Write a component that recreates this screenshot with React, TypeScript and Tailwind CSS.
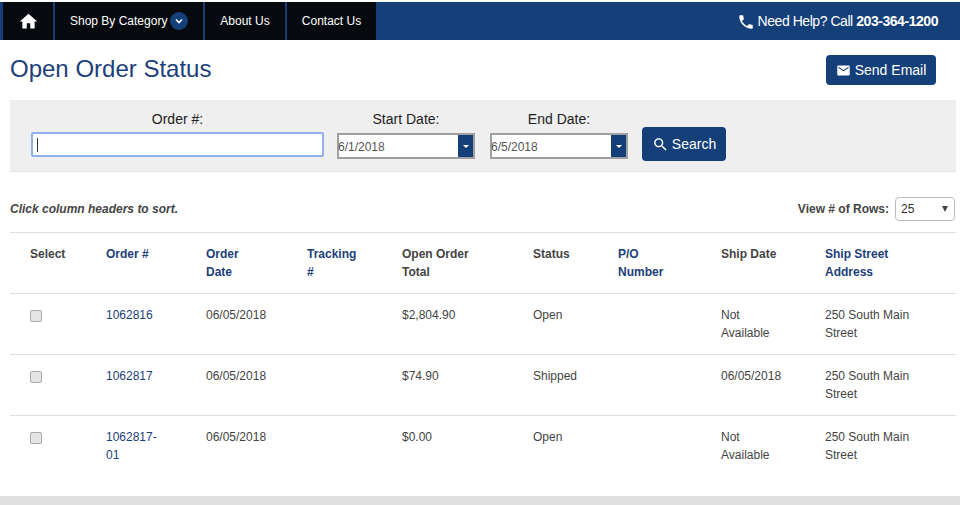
import React from 'react';

const rows = [
  { id: '1062816', date: '06/05/2018', total: '$2,804.90', status: 'Open', ship: 'Not Available' },
  { id: '1062817', date: '06/05/2018', total: '$74.90', status: 'Shipped', ship: '06/05/2018' },
  { id: '1062817-01', date: '06/05/2018', total: '$0.00', status: 'Open', ship: 'Not Available' },
];

const navItem = 'flex h-full items-center bg-[#060a0e] text-white text-[12px]';

function Icon({ d, size, className }: { d: string; size: number; className?: string }) {
  return (
    <svg width={size} height={size} viewBox="0 0 24 24" fill="currentColor" className={className}>
      <path d={d} />
    </svg>
  );
}

function DateField({ label, value }: { label: string; value: string }) {
  return (
    <div className="flex w-[138px] flex-col">
      <label className="text-center text-[14px] leading-[20px] text-[#222]">{label}</label>
      <div className="mt-[4px] flex h-[26px] border-2 border-[#a0a0a0] bg-white">
        <span className="-ml-px flex-1 text-[12px] leading-[24px] text-[#555]">{value}</span>
        <span className="flex w-[15px] items-center justify-center bg-[#143f78]">
          <span className="h-0 w-0 border-x-[3px] border-t-[3px] border-x-transparent border-t-white" />
        </span>
      </div>
    </div>
  );
}

export default function App() {
  return (
    <div className="h-[505px] w-[960px] overflow-hidden bg-white font-['Liberation_Sans',Arial,sans-serif]">
      <div className="pt-[2px]">
        <nav className="flex h-[38px] items-center gap-[2px] bg-[#143f78] pl-[3px] pr-[22px]">
          <a className={`${navItem} w-[50px] justify-center`}>
            <Icon size={21} d="M10 20v-6h4v6h5v-8h3L12 3 2 12h3v8z" />
          </a>
          <a className={`${navItem} w-[148px] pl-[15px]`}>
            Shop By Category
            <span className="ml-[3px] flex h-[18px] w-[18px] items-center justify-center rounded-full bg-[#143f78]">
              <svg width="8" height="6" viewBox="0 0 8 6" fill="none" stroke="white" strokeWidth="1.6">
                <path d="M1 1.5l3 3 3-3" />
              </svg>
            </span>
          </a>
          <a className={`${navItem} w-[80px] justify-center`}>About Us</a>
          <a className={`${navItem} w-[89px] justify-center`}>Contact Us</a>
          <div className="ml-auto flex items-center pt-[1px] text-[14px] text-white">
            <Icon
              size={18}
              className="mr-[3px]"
              d="M6.62 10.79c1.44 2.83 3.76 5.14 6.59 6.59l2.2-2.2c.27-.27.67-.36 1.02-.24 1.12.37 2.33.57 3.57.57.55 0 1 .45 1 1V20c0 .55-.45 1-1 1-9.39 0-17-7.61-17-17 0-.55.45-1 1-1h3.5c.55 0 1 .45 1 1 0 1.25.2 2.45.57 3.57.11.35.03.74-.25 1.02l-2.2 2.2z"
            />
            <span className="tracking-[-0.45px]">Need Help? Call <b>203-364-1200</b></span>
          </div>
        </nav>
      </div>

      <div className="pl-[10px] pr-[4px]">
        <div className="flex items-start justify-between pr-[20px] pt-[15px]">
          <h1 className="text-[24px] leading-[28px] text-[#1c4079]">Open Order Status</h1>
          <button className="flex h-[30px] w-[110px] items-center justify-center gap-[4px] rounded-[4px] bg-[#143f78] text-[14px] text-white">
            <Icon size={15} d="M20 4H4c-1.1 0-1.99.9-1.99 2L2 18c0 1.1.9 2 2 2h16c1.1 0 2-.9 2-2V6c0-1.1-.9-2-2-2zm0 4l-8 5-8-5V6l8 5 8-5v2z" />
            Send Email
          </button>
        </div>

        <form className="mt-[15px] flex h-[72px] items-start border-b border-[#e3e3e3] bg-[#efefef] pl-[21px] pt-[9px]">
          <div className="flex w-[293px] flex-col">
            <label className="text-center text-[14px] leading-[20px] text-[#222]">Order #:</label>
            <div className="mt-[3px] flex h-[25px] items-center rounded-[2px] border-2 border-[#8fb0ec] bg-white pl-[4px]">
              <span className="h-[14px] w-px bg-[#333]" />
            </div>
          </div>
          <div className="ml-[13px]">
            <DateField label="Start Date:" value="6/1/2018" />
          </div>
          <div className="ml-[15px]">
            <DateField label="End Date:" value="6/5/2018" />
          </div>
          <button className="ml-[14px] mt-[18px] flex h-[34px] w-[84px] items-center justify-center gap-[3px] rounded-[4px] bg-[#143f78] text-[14px] text-white">
            <Icon size={17} d="M15.5 14h-.79l-.28-.27C15.41 12.59 16 11.11 16 9.5 16 5.91 13.09 3 9.5 3S3 5.91 3 9.5 5.91 16 9.5 16c1.61 0 3.09-.59 4.23-1.57l.27.28v.79l5 4.99L20.49 19l-4.99-5zm-6 0C7.01 14 5 11.99 5 9.5S7.01 5 9.5 5 14 7.01 14 9.5 11.99 14 9.5 14z" />
            Search
          </button>
        </form>

        <div className="flex h-[60px] items-center justify-between pr-[1px] pt-[14px]">
          <em className="text-[12px] font-bold text-[#444]">Click column headers to sort.</em>
          <div className="flex items-center gap-[6px]">
            <span className="text-[12px] font-bold text-[#444]">View # of Rows:</span>
            <div className="flex h-[24px] w-[60px] items-center justify-between rounded-[4px] border border-[#bbb] bg-white pl-[5px] pr-[6px]">
              <span className="text-[12px] text-[#333]">25</span>
              <span className="h-0 w-0 border-x-[3px] border-t-[6px] border-x-transparent border-t-[#444]" />
            </div>
          </div>
        </div>

        <table className="w-[946px] table-fixed border-collapse text-left text-[12px] leading-[18px] text-[#444]">
          <colgroup>
            <col className="w-[76px]" />
            <col className="w-[100px]" />
            <col className="w-[101px]" />
            <col className="w-[95px]" />
            <col className="w-[131px]" />
            <col className="w-[85px]" />
            <col className="w-[103px]" />
            <col className="w-[104px]" />
            <col className="w-[151px]" />
          </colgroup>
          <thead>
            <tr className="border-y border-[#dedede] align-top font-bold">
              <th className="py-[12px] pl-[20px] pr-[10px]">Select</th>
              <th className="py-[12px] pl-[20px] pr-[10px] text-[#1c4079]">Order #</th>
              <th className="py-[12px] pl-[20px] pr-[40px] text-[#1c4079]">Order Date</th>
              <th className="py-[12px] pl-[20px] pr-[20px] text-[#1c4079]">Tracking #</th>
              <th className="py-[12px] pl-[20px] pr-[30px]">Open Order Total</th>
              <th className="py-[12px] pl-[20px] pr-[10px]">Status</th>
              <th className="py-[12px] pl-[20px] pr-[20px] text-[#1c4079]">P/O Number</th>
              <th className="py-[12px] pl-[20px] pr-[10px]">Ship Date</th>
              <th className="py-[12px] pl-[20px] pr-[40px] text-[#1c4079]">Ship Street Address</th>
            </tr>
          </thead>
          <tbody>
            {rows.map((r, i) => (
              <tr key={r.id} className={`align-top ${i < rows.length - 1 ? 'border-b border-[#dedede]' : ''}`}>
                <td className="py-[12px] pl-[20px]">
                  <span className="mt-[4px] block h-[12px] w-[12px] rounded-[2px] border border-[#aaa] bg-[#e4e4e4]" />
                </td>
                <td className="py-[12px] pl-[20px] pr-[20px] text-[#1c4079]">{r.id}</td>
                <td className="py-[12px] pl-[20px]">{r.date}</td>
                <td className="py-[12px] pl-[20px]"></td>
                <td className="py-[12px] pl-[20px]">{r.total}</td>
                <td className="py-[12px] pl-[20px]">{r.status}</td>
                <td className="py-[12px] pl-[20px]"></td>
                <td className="py-[12px] pl-[20px] pr-[20px]">{r.ship}</td>
                <td className="py-[12px] pl-[20px] pr-[30px]">250 South Main Street</td>
              </tr>
            ))}
          </tbody>
        </table>
      </div>

      <div className="mt-[20px] h-[20px] bg-[#e0e0e0]" />
    </div>
  );
}
